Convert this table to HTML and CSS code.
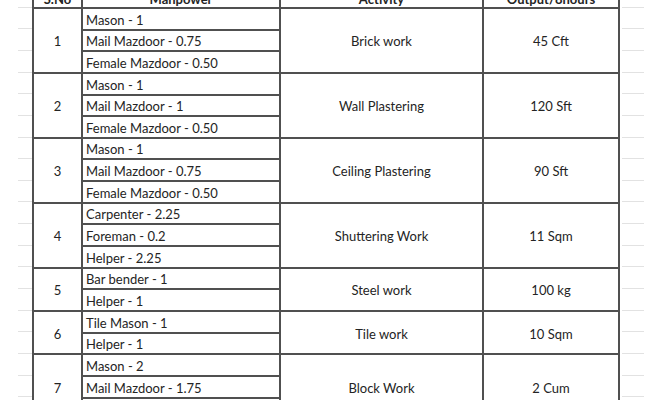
FILE: index.html
```html
<!DOCTYPE html>
<html>
<head>
<meta charset="utf-8">
<link rel="stylesheet" href="styles.css">
</head>
<body>
<div class="sheet">
  <div class="gutter gutter-left"></div>
  <table class="grid">
    <colgroup>
      <col class="c-no"><col class="c-man"><col class="c-act"><col class="c-out">
    </colgroup>
    <tr class="head">
      <th>S.No</th><th>Manpower</th><th>Activity</th><th>Output/8hours</th>
    </tr>
    <tr><td class="no" rowspan="3">1</td><td class="man">Mason - 1</td><td class="act" rowspan="3">Brick work</td><td class="out" rowspan="3">45 Cft</td></tr>
    <tr><td class="man">Mail Mazdoor - 0.75</td></tr>
    <tr><td class="man">Female Mazdoor - 0.50</td></tr>

    <tr><td class="no" rowspan="3">2</td><td class="man">Mason - 1</td><td class="act" rowspan="3">Wall Plastering</td><td class="out" rowspan="3">120 Sft</td></tr>
    <tr><td class="man">Mail Mazdoor - 1</td></tr>
    <tr><td class="man">Female Mazdoor - 0.50</td></tr>

    <tr><td class="no" rowspan="3">3</td><td class="man">Mason - 1</td><td class="act" rowspan="3">Ceiling Plastering</td><td class="out" rowspan="3">90 Sft</td></tr>
    <tr><td class="man">Mail Mazdoor - 0.75</td></tr>
    <tr><td class="man">Female Mazdoor - 0.50</td></tr>

    <tr><td class="no" rowspan="3">4</td><td class="man">Carpenter - 2.25</td><td class="act" rowspan="3">Shuttering Work</td><td class="out" rowspan="3">11 Sqm</td></tr>
    <tr><td class="man">Foreman - 0.2</td></tr>
    <tr><td class="man">Helper - 2.25</td></tr>

    <tr><td class="no" rowspan="2">5</td><td class="man">Bar bender - 1</td><td class="act" rowspan="2">Steel work</td><td class="out" rowspan="2">100 kg</td></tr>
    <tr><td class="man">Helper - 1</td></tr>

    <tr><td class="no" rowspan="2">6</td><td class="man">Tile Mason - 1</td><td class="act" rowspan="2">Tile work</td><td class="out" rowspan="2">10 Sqm</td></tr>
    <tr><td class="man">Helper - 1</td></tr>

    <tr><td class="no" rowspan="3">7</td><td class="man">Mason - 2</td><td class="act" rowspan="3">Block Work</td><td class="out" rowspan="3">2 Cum</td></tr>
    <tr><td class="man">Mail Mazdoor - 1.75</td></tr>
    <tr><td class="man">Female Mazdoor - 1.00</td></tr>
  </table>
  <div class="gutter gutter-right"></div>
</div>
</body>
</html>
```

FILE: styles.css
```css
html, body {
  margin: 0;
  padding: 0;
  background: #ffffff;
}

body {
  width: 650px;
  height: 400px;
  overflow: hidden;
  font-family: Lato, "Open Sans", "Liberation Sans", sans-serif;
  color: #242424;
}

.sheet {
  display: flex;
  align-items: flex-start;
  margin-top: -14.65px;
}

.gutter {
  align-self: stretch;
  background-image: repeating-linear-gradient(to bottom, #e2e2e2 0, #e2e2e2 1px, transparent 1px, transparent 21.65px);
  background-position: 0 0;
}

.gutter-left {
  width: 14px;
  margin-left: 18px;
}

.gutter-right {
  width: 22px;
  margin-left: 2px;
}

.grid {
  border-collapse: collapse;
  table-layout: fixed;
  width: 586px;
  background: #ffffff;
  font-size: 13px;
}

.c-no { width: 49px; }
.c-man { width: 198px; }
.c-act { width: 203px; }
.c-out { width: 136px; }

.grid tr {
  height: 21.65px;
}

.grid th,
.grid td {
  border: 2px solid #505050;
  padding: 0;
  line-height: 15px;
  white-space: nowrap;
  overflow: hidden;
}

.grid th {
  font-weight: bold;
  text-align: center;
  vertical-align: bottom;
  padding-bottom: 0;
}

.grid td.man {
  text-align: left;
  vertical-align: bottom;
  padding-left: 3px;
  padding-bottom: 1px;
}

.grid td.no,
.grid td.act,
.grid td.out {
  text-align: center;
  vertical-align: middle;
  padding-top: 3px;
}
```
